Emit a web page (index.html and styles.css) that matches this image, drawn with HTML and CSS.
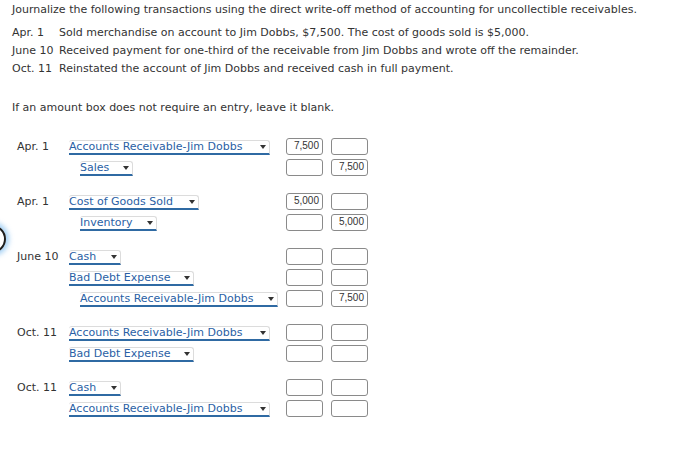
FILE: index.html
```html
<!DOCTYPE html>
<html>
<head>
<meta charset="utf-8">
<link rel="stylesheet" href="styles.css">
</head>
<body>
<div class="ring"></div>
<div class="page">
  <p class="intro">Journalize the following transactions using the direct write-off method of accounting for uncollectible receivables.</p>
  <div class="txns">
    <div class="txn"><span class="td">Apr. 1</span><span>Sold merchandise on account to Jim Dobbs, $7,500. The cost of goods sold is $5,000.</span></div>
    <div class="txn"><span class="td">June 10</span><span>Received payment for one-third of the receivable from Jim Dobbs and wrote off the remainder.</span></div>
    <div class="txn"><span class="td">Oct. 11</span><span>Reinstated the account of Jim Dobbs and received cash in full payment.</span></div>
  </div>
  <p class="note">If an amount box does not require an entry, leave it blank.</p>

  <div class="journal">
    <div class="entry">
      <div class="row"><span class="date">Apr. 1</span><span class="acct"><span class="sel w-ar">Accounts Receivable-Jim Dobbs<i class="arr"></i></span></span><span class="box">7,500</span><span class="box"></span></div>
      <div class="row"><span class="date"></span><span class="acct ind"><span class="sel w-sales">Sales<i class="arr"></i></span></span><span class="box"></span><span class="box">7,500</span></div>
    </div>
    <div class="entry">
      <div class="row"><span class="date">Apr. 1</span><span class="acct"><span class="sel w-cogs">Cost of Goods Sold<i class="arr"></i></span></span><span class="box">5,000</span><span class="box"></span></div>
      <div class="row"><span class="date"></span><span class="acct ind"><span class="sel w-inv">Inventory<i class="arr"></i></span></span><span class="box"></span><span class="box">5,000</span></div>
    </div>
    <div class="entry">
      <div class="row"><span class="date">June 10</span><span class="acct"><span class="sel w-cash">Cash<i class="arr"></i></span></span><span class="box"></span><span class="box"></span></div>
      <div class="row"><span class="date"></span><span class="acct"><span class="sel w-bde">Bad Debt Expense<i class="arr"></i></span></span><span class="box"></span><span class="box"></span></div>
      <div class="row"><span class="date"></span><span class="acct ind"><span class="sel w-ar">Accounts Receivable-Jim Dobbs<i class="arr"></i></span></span><span class="box"></span><span class="box">7,500</span></div>
    </div>
    <div class="entry">
      <div class="row"><span class="date">Oct. 11</span><span class="acct"><span class="sel w-ar">Accounts Receivable-Jim Dobbs<i class="arr"></i></span></span><span class="box"></span><span class="box"></span></div>
      <div class="row"><span class="date"></span><span class="acct"><span class="sel w-bde">Bad Debt Expense<i class="arr"></i></span></span><span class="box"></span><span class="box"></span></div>
    </div>
    <div class="entry">
      <div class="row"><span class="date">Oct. 11</span><span class="acct"><span class="sel w-cash">Cash<i class="arr"></i></span></span><span class="box"></span><span class="box"></span></div>
      <div class="row"><span class="date"></span><span class="acct"><span class="sel w-ar">Accounts Receivable-Jim Dobbs<i class="arr"></i></span></span><span class="box"></span><span class="box"></span></div>
    </div>
  </div>
</div>
</body>
</html>
```
FILE: styles.css
```css
html, body {
  margin: 0;
  padding: 0;
  background: #fff;
}
body {
  font-family: "DejaVu Sans", Verdana, sans-serif;
  font-size: 11px;
  color: #333;
  position: relative;
  overflow: hidden;
  width: 681px;
  height: 455px;
}
.page {
  padding: 3px 0 0 12px;
}
.intro {
  margin: 0;
  line-height: 13px;
}
.txns {
  margin-top: 7px;
}
.txn {
  display: flex;
  height: 18px;
  line-height: 13px;
  align-items: center;
}
.td {
  width: 47px;
  flex: none;
}
.note {
  margin: 24px 0 0 0;
  line-height: 13px;
}
.journal {
  margin-top: 24px;
  padding-left: 5px;
}
.entry {
  display: flex;
  flex-direction: column;
  gap: 4px;
  margin-bottom: 17px;
}
.row {
  display: flex;
  align-items: center;
  height: 17px;
}
.date {
  width: 52px;
  flex: none;
}
.acct {
  width: 217px;
  flex: none;
  display: flex;
  align-items: center;
}
.acct.ind {
  padding-left: 11px;
  width: 206px;
}
.sel {
  position: relative;
  display: inline-flex;
  align-items: center;
  box-sizing: border-box;
  height: 15px;
  margin-top: 1px;
  color: #2a5fa5;
  border: 1px solid #dcdcdc;
  border-bottom: 2px solid #2f6aa3;
  border-radius: 3px 3px 0 0;
  border-left: none;
  padding-left: 0;
  white-space: nowrap;
  line-height: 12px;
}
.arr {
  position: absolute;
  right: 3px;
  top: 4px;
  width: 0;
  height: 0;
  border-left: 3px solid transparent;
  border-right: 3px solid transparent;
  border-top: 4px solid #333;
}
.w-ar { width: 201px; }
.w-sales { width: 53px; }
.w-cogs { width: 130px; }
.w-inv { width: 77px; }
.w-cash { width: 52px; }
.w-bde { width: 125px; }
.acct.ind .w-ar { width: 198px; }
.box {
  box-sizing: border-box;
  width: 37px;
  height: 17px;
  border: 1px solid #8a8a8a;
  border-radius: 3px;
  margin-right: 8px;
  font-family: "Liberation Sans", Arial, sans-serif;
  font-size: 10px;
  color: #333;
  text-align: right;
  padding-right: 3px;
  line-height: 14px;
  flex: none;
}
.ring {
  position: absolute;
  left: -22px;
  top: 225px;
  width: 24px;
  height: 24px;
  border: 2px solid #1e1e1e;
  border-radius: 50%;
  box-shadow: 0 0 5px 3px rgba(90, 170, 235, 0.55);
}
```
